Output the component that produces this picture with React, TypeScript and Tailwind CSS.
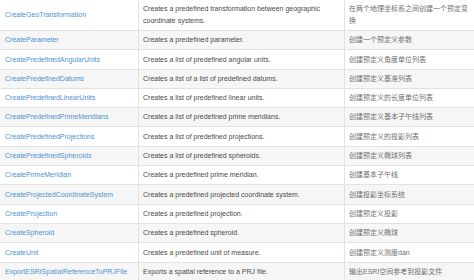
const rows: [string, string, string][] = [
  ['CreateGeoTransformation', 'Creates a predefined transformation between geographic coordinate systems.', '在两个地理坐标系之间创建一个预定变换'],
  ['CreateParameter', 'Creates a predefined parameter.', '创建一个预定义参数'],
  ['CreatePredefinedAngularUnits', 'Creates a list of predefined angular units.', '创建预定义角度单位列表'],
  ['CreatePredefinedDatums', 'Creates a list of a list of predefined datums.', '创建预定义基准列表'],
  ['CreatePredefinedLinearUnits', 'Creates a list of predefined linear units.', '创建预定义的长度单位列表'],
  ['CreatePredefinedPrimeMeridians', 'Creates a list of predefined prime meridians.', '创建预定义基本子午线列表'],
  ['CreatePredefinedProjections', 'Creates a list of predefined projections.', '创建预定义的投影列表'],
  ['CreatePredefinedSpheroids', 'Creates a list of predefined spheroids.', '创建预定义椭球列表'],
  ['CreatePrimeMeridian', 'Creates a predefined prime meridian.', '创建基本子午线'],
  ['CreateProjectedCoordinateSystem', 'Creates a predefined projected coordinate system.', '创建投影坐标系统'],
  ['CreateProjection', 'Creates a predefined projection.', '创建预定义投影'],
  ['CreateSpheroid', 'Creates a predefined spheroid.', '创建预定义椭球'],
  ['CreateUnit', 'Creates a predefined unit of measure.', '创建预定义测度dan'],
  ['ExportESRISpatialReferenceToPRJFile', 'Exports a spatial reference to a PRJ file.', '输出ESRI空间参考到投影文件'],
];

export default function App() {
  return (
    <div
      className="w-[474px] h-[280px] overflow-hidden bg-white text-[7px] leading-[11.7px]"
      style={{ fontFamily: '"Liberation Sans", "Noto Sans CJK SC", sans-serif' }}
    >
      {rows.map(([name, desc, zh], i) => (
        <div
          key={name}
          className={`grid grid-cols-[139px_206px_1fr] border-b border-[#e2e2e2] ${
            i === 0 ? 'h-[31px]' : 'h-[19.3px]'
          } ${i % 2 === 1 ? 'bg-[#f6f6f6]' : 'bg-white'}`}
        >
          <div className="flex items-center border-r border-[#e2e2e2] px-[5px] text-[#4f92d3] whitespace-nowrap">
            {name}
          </div>
          <div className="flex items-center border-r border-[#e2e2e2] pl-[4px] pr-[8px] text-[#4a4a4a]">
            {desc}
          </div>
          <div className="flex items-center pl-[4px] pr-[4px] text-[#707070]">{zh}</div>
        </div>
      ))}
    </div>
  );
}
